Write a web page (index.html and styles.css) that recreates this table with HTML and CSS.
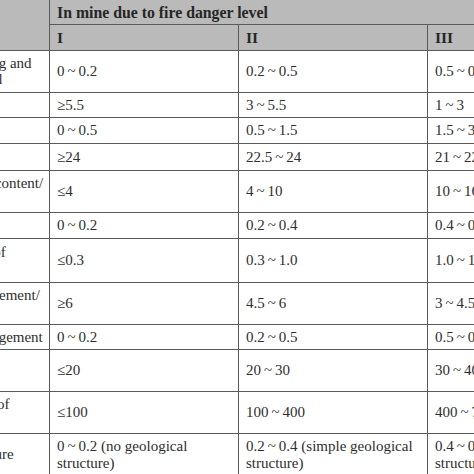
FILE: index.html
```html
<!DOCTYPE html>
<html lang="en">
<head>
<meta charset="utf-8">
<title>Fire danger level table</title>
<link rel="stylesheet" href="styles.css">
</head>
<body>
<div class="frame">
<table class="grid">
  <colgroup>
    <col class="c-name">
    <col class="c-lvl">
    <col class="c-lvl">
    <col class="c-lvl">
  </colgroup>
  <thead>
    <tr class="h1">
      <th rowspan="2" class="corner"></th>
      <th colspan="3">In mine due to fire danger level</th>
    </tr>
    <tr class="h2">
      <th>I</th>
      <th>II</th>
      <th>III</th>
    </tr>
  </thead>
  <tbody>
    <tr>
      <td class="name">Coals spontaneous firing and<br>tendencies grading level</td>
      <td>0&thinsp;~&thinsp;0.2</td>
      <td>0.2&thinsp;~&thinsp;0.5</td>
      <td>0.5&thinsp;~&thinsp;0.8</td>
    </tr>
    <tr>
      <td class="name">Seam thickness/m</td>
      <td>≥5.5</td>
      <td>3&thinsp;~&thinsp;5.5</td>
      <td>1&thinsp;~&thinsp;3</td>
    </tr>
    <tr>
      <td class="name">Seam dip angle/°</td>
      <td>0&thinsp;~&thinsp;0.5</td>
      <td>0.5&thinsp;~&thinsp;1.5</td>
      <td>1.5&thinsp;~&thinsp;3</td>
    </tr>
    <tr class="r-tall">
      <td class="name">Air temperature/°C</td>
      <td>≥24</td>
      <td>22.5&thinsp;~&thinsp;24</td>
      <td>21&thinsp;~&thinsp;22.5</td>
    </tr>
    <tr>
      <td class="name">Coal internal moisture content/<br>%</td>
      <td>≤4</td>
      <td>4&thinsp;~&thinsp;10</td>
      <td>10&thinsp;~&thinsp;16</td>
    </tr>
    <tr>
      <td class="name">Ash content/%</td>
      <td>0&thinsp;~&thinsp;0.2</td>
      <td>0.2&thinsp;~&thinsp;0.4</td>
      <td>0.4&thinsp;~&thinsp;0.6</td>
    </tr>
    <tr class="r-taller">
      <td class="name">Pyritic sulfur contents of<br>coal/%</td>
      <td>≤0.3</td>
      <td>0.3&thinsp;~&thinsp;1.0</td>
      <td>1.0&thinsp;~&thinsp;1.5</td>
    </tr>
    <tr>
      <td class="name">Coal seam floor displacement/<br>mm</td>
      <td>≥6</td>
      <td>4.5&thinsp;~&thinsp;6</td>
      <td>3&thinsp;~&thinsp;4.5</td>
    </tr>
    <tr>
      <td class="name">Mines ventilation management</td>
      <td>0&thinsp;~&thinsp;0.2</td>
      <td>0.2&thinsp;~&thinsp;0.5</td>
      <td>0.5&thinsp;~&thinsp;0.8</td>
    </tr>
    <tr>
      <td class="name">Dust concentration/<br>mg/m³</td>
      <td>≤20</td>
      <td>20&thinsp;~&thinsp;30</td>
      <td>30&thinsp;~&thinsp;40</td>
    </tr>
    <tr>
      <td class="name">Average daily advance of<br>face/m</td>
      <td>≤100</td>
      <td>100&thinsp;~&thinsp;400</td>
      <td>400&thinsp;~&thinsp;700</td>
    </tr>
    <tr>
      <td class="name">Local geological structure</td>
      <td>0&thinsp;~&thinsp;0.2 (no geological<br>structure)</td>
      <td>0.2&thinsp;~&thinsp;0.4 (simple geological<br>structure)</td>
      <td>0.4&thinsp;~&thinsp;0.6 (medium geological<br>structure)</td>
    </tr>
  </tbody>
</table>
</div>
</body>
</html>
```
FILE: styles.css
```css
html, body {
  margin: 0;
  padding: 0;
  overflow: hidden;
  background: #ffffff;
}

.frame {
  width: 474px;
  height: 474px;
  overflow: hidden;
}

.grid {
  margin-left: -151px;
  border-collapse: collapse;
  table-layout: fixed;
  width: 768px;
  font-family: "Liberation Serif", "Times New Roman", serif;
  font-size: 15px;
  color: #2e2e2e;
}

.c-name { width: 200px; }
.c-lvl { width: 189px; }

.grid th,
.grid td {
  border: 1.5px solid #5a5a5a;
  text-align: left;
  vertical-align: middle;
  white-space: nowrap;
  overflow: hidden;
}

.grid thead th {
  background: #bababa;
  font-weight: bold;
  color: #262626;
  padding: 0 7px;
  line-height: 17px;
  font-size: 15.5px;
}

.grid thead tr.h1 th {
  height: 24px;
  border-top: none;
  font-size: 15.8px;
}

.grid thead tr.h2 th {
  height: 24.5px;
}

.grid td {
  padding: 4px 7px;
  line-height: 16.5px;
}

.grid tr.r-tall td {
  padding-top: 5px;
  padding-bottom: 5px;
}

.grid tr.r-taller td {
  padding-top: 5px;
  padding-bottom: 5px;
}
```
